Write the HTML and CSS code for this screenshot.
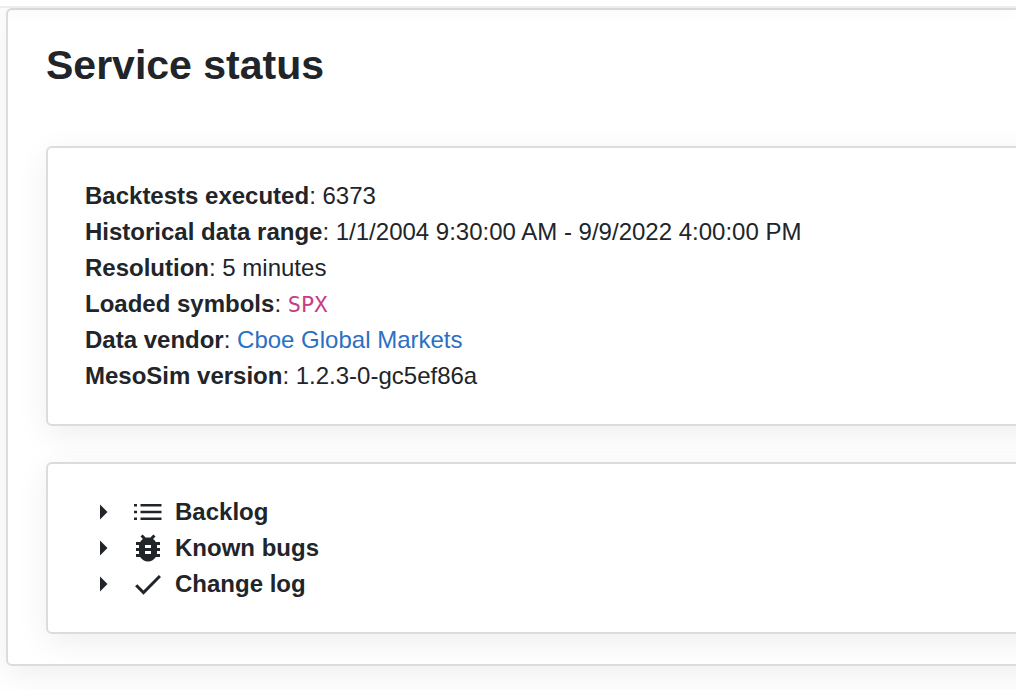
FILE: index.html
```html
<!DOCTYPE html>
<html lang="en">
<head>
<meta charset="utf-8">
<meta name="viewport" content="width=device-width, initial-scale=1">
<title>Service status</title>
<link rel="stylesheet" href="styles.css">
</head>
<body>
<header class="topbar"></header>
<main class="card status">
  <h1 class="title">Service status</h1>
  <section class="card panel">
    <div><strong>Backtests executed</strong>: 6373</div>
    <div><strong>Historical data range</strong>: 1/1/2004 9:30:00 AM - 9/9/2022 4:00:00 PM</div>
    <div><strong>Resolution</strong>: 5 minutes</div>
    <div><strong>Loaded symbols</strong>: <code class="symbol">SPX</code></div>
    <div><strong>Data vendor</strong>: <a class="link" href="#">Cboe Global Markets</a></div>
    <div><strong>MesoSim version</strong>: 1.2.3-0-gc5ef86a</div>
  </section>
  <section class="card panel">
    <details>
      <summary class="node">
        <svg class="arrow" viewBox="0 0 8 16" aria-hidden="true"><path d="M0 .5L7.500 8 0 15.500z"/></svg>
        <svg class="icon" viewBox="0 0 32 32" aria-hidden="true"><path d="M2 8h3v2.500H2zM2 14.750h3v2.500H2zM2 21.500h3v2.500H2zM8.500 8h21v2.500h-21zM8.500 14.750h21v2.500h-21zM8.500 21.500h21v2.500h-21z"/></svg>
        Backlog
      </summary>
    </details>
    <details>
      <summary class="node">
        <svg class="arrow" viewBox="0 0 8 16" aria-hidden="true"><path d="M0 .5L7.500 8 0 15.500z"/></svg>
        <svg class="icon" viewBox="1.33 1.33 21.33 21.33" aria-hidden="true"><path d="M14 12H10V10H14M14 16H10V14H14M20 8H17.190C16.740 7.220 16.120 6.550 15.370 6.040L17 4.410L15.590 3L13.420 5.170C12.960 5.060 12.500 5 12 5C11.500 5 11.040 5.060 10.590 5.170L8.410 3L7 4.410L8.620 6.040C7.880 6.550 7.260 7.220 6.810 8H4V10H6.090C6.040 10.330 6 10.660 6 11V12H4V14H6V15C6 15.340 6.040 15.670 6.090 16H4V18H6.810C7.850 19.790 9.780 21 12 21C14.220 21 16.150 19.790 17.190 18H20V16H17.910C17.960 15.670 18 15.340 18 15V14H20V12H18V11C18 10.660 17.960 10.330 17.910 10H20V8Z"/></svg>
        Known bugs
      </summary>
    </details>
    <details>
      <summary class="node">
        <svg class="arrow" viewBox="0 0 8 16" aria-hidden="true"><path d="M0 .5L7.500 8 0 15.500z"/></svg>
        <svg class="icon" viewBox="0 0 32 32" aria-hidden="true"><path d="M11.500 22.500l-6.200-6.300-2.200 2.100 8.400 8.500L29 9.100l-2.100-2.100z"/></svg>
        Change log
      </summary>
    </details>
  </section>
</main>
</body>
</html>
```
FILE: styles.css
```css
* { box-sizing: border-box; }
body {
  margin: 0;
  overflow-x: hidden;
  background: #fff;
  color: #212529;
  font: 24px/36px "Liberation Sans", Arial, sans-serif;
}
.topbar {
  position: relative;
  z-index: 1;
  height: 8px;
  border-bottom: 2px solid #ededed;
  background: #fff;
  box-shadow: 0 2px 16px rgba(0, 0, 0, .05);
}
.card {
  border: 2px solid #dcdcdc;
  border-radius: 6px;
  background: #fff;
  box-shadow: 0 8px 32px rgba(0, 0, 0, .07);
}
.status {
  margin: 0 -56px 24px 6px;
  padding: 30px 0 30px 38px;
  overflow: hidden;
}
.title {
  margin: 0;
  font-size: 41px;
  line-height: 50px;
}
.panel {
  margin: 36px 0 0;
  padding: 30px 36px 30px 37px;
}
.title + .panel { margin-top: 56px; }
.symbol {
  color: #c63d82;
  font: 22px/24px "DejaVu Sans Mono", monospace;
}
.link {
  color: #2b70c2;
  text-decoration: none;
}
.node {
  display: flex;
  align-items: center;
  padding-left: 15px;
  font-weight: bold;
  list-style: none;
  cursor: pointer;
}
.node::-webkit-details-marker { display: none; }
.arrow {
  width: 8px;
  height: 16px;
  margin-right: 24px;
}
.icon {
  width: 32px;
  height: 32px;
  margin-right: 11px;
}
.arrow, .icon { fill: currentColor; }
```
